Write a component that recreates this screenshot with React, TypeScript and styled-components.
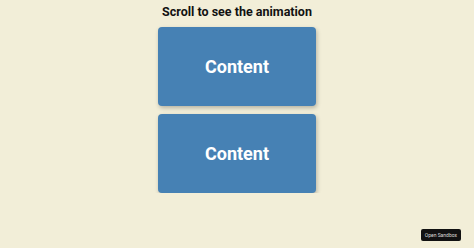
import styled, { createGlobalStyle } from "styled-components";

const GlobalStyle = createGlobalStyle`
  html, body {
    margin: 0;
    padding: 0;
    background: #f2eed8;
    font-family: Roboto, "Liberation Sans", sans-serif;
  }
`;

const Page = styled.div`
  display: flex;
  flex-direction: column;
  align-items: center;
  padding-top: 4px;
`;

const Title = styled.h1`
  margin: 0 0 8px;
  font-size: 12.5px;
  font-weight: 700;
  line-height: 15px;
  color: #111;
`;

const CardList = styled.div`
  display: flex;
  flex-direction: column;
  gap: 8px;
`;

const Card = styled.div`
  display: flex;
  align-items: center;
  justify-content: center;
  width: 158px;
  height: 79px;
  border-radius: 4px;
  background: #4681b4;
  box-shadow: 1px 2px 4px rgba(0, 0, 0, 0.25);
  color: #fff;
  font-size: 18px;
  font-weight: 700;
`;

const SandboxButton = styled.div`
  position: fixed;
  right: 13px;
  bottom: 7px;
  padding: 3px 4px;
  border-radius: 2px;
  background: #111;
  color: #ddd;
  font-size: 5px;
  line-height: 6px;
`;

export default function App() {
  return (
    <>
      <GlobalStyle />
      <Page>
        <Title>Scroll to see the animation</Title>
        <CardList>
          <Card>Content</Card>
          <Card>Content</Card>
        </CardList>
      </Page>
      <SandboxButton>Open Sandbox</SandboxButton>
    </>
  );
}
